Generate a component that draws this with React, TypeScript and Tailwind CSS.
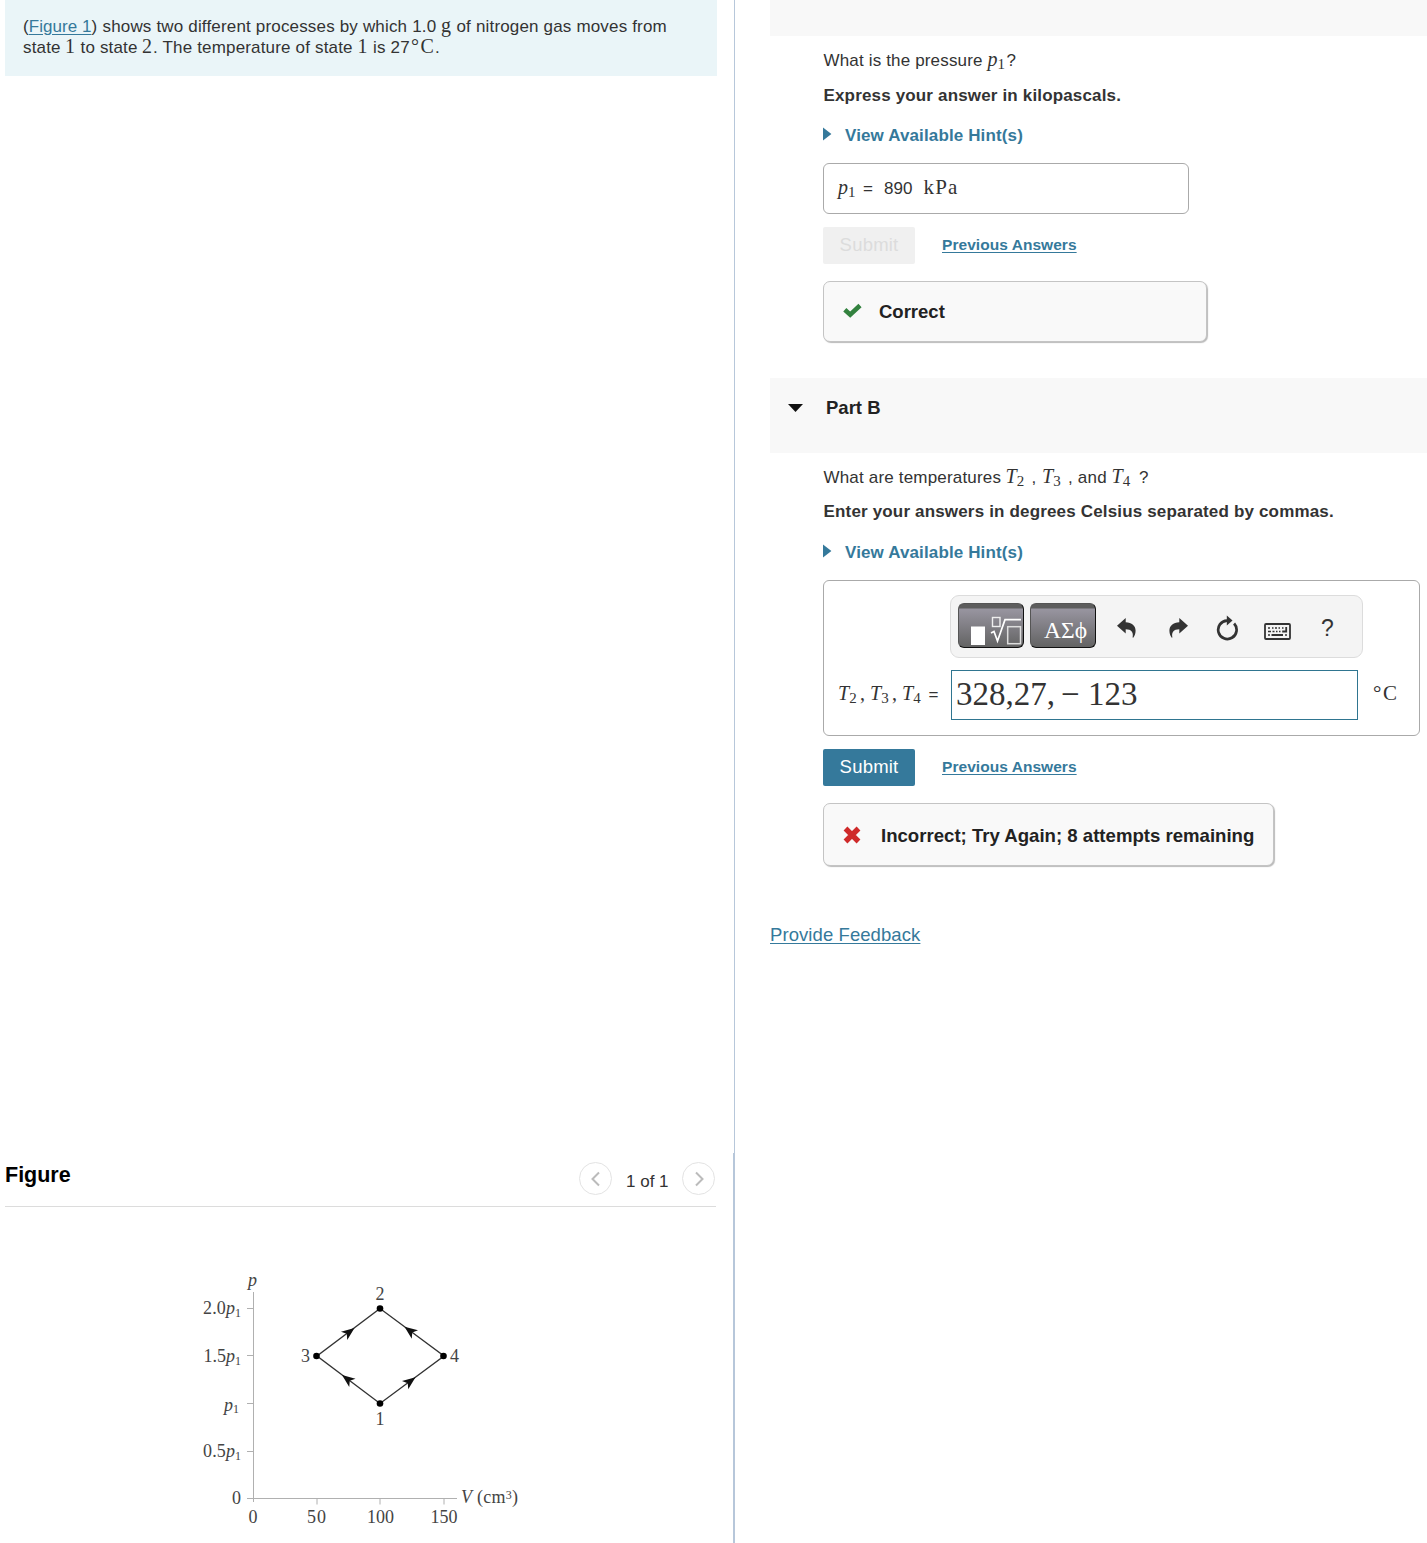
import React from 'react';

type SegProps = { w: string; cls?: string; children: React.ReactNode };

function Seg({ w, cls = '', children }: SegProps) {
  return <span className={`shrink-0 whitespace-pre ${w} ${cls}`}>{children}</span>;
}

const serif = "font-['Liberation_Serif']";

function Variable({ name, sub, w }: { name: string; sub: string; w: string }) {
  return (
    <span className={`shrink-0 whitespace-nowrap font-['Liberation_Serif'] text-[20px] leading-none ${w}`}>
      <i>{name}</i>
      <span className="relative top-[3px] text-[15px]">{sub}</span>
    </span>
  );
}

function Hints() {
  return (
    <div className="flex h-5 items-center text-[17px] leading-5 font-bold text-[#35799b]">
      <svg className="mr-[13px] -mt-[3px] h-[14px] w-[9px]" viewBox="0 0 9 14">
        <path d="M0 0.5 8.4 7 0 13.5Z" fill="currentColor" />
      </svg>
      <span className="mt-px tracking-[0.13px] whitespace-nowrap">View Available Hint(s)</span>
    </div>
  );
}

function Actions({ disabled }: { disabled?: boolean }) {
  return (
    <div className="flex h-[37px] w-[400px]">
      <button
        className={`h-[37px] w-[92px] rounded-[2px] pb-[2px] text-[18.500px] leading-[22px] tracking-[0.2px] ${
          disabled ? 'bg-[#f0f0f0] text-[#dcdcdc]' : 'bg-[#35799b] text-white'
        }`}
      >
        Submit
      </button>
      <a className="mt-[8px] ml-[27px] text-[15.500px] leading-5 font-bold tracking-[0.05px] whitespace-nowrap text-[#35799b] underline underline-offset-2">
        Previous Answers
      </a>
    </div>
  );
}

function Keyboard() {
  return (
    <svg className="h-[17px] w-[27px]" viewBox="0 0 27 17" fill="none">
      <rect x="1" y="1" width="25" height="15" rx="1" stroke="#333" strokeWidth="1.8" />
      <path d="M4 5h2M8 5h1.500M11 5h2M14.500 5h1.500M18 5h1.500M4 8.500h3M8.500 8.500h2M12 8.500h1.500M15 8.500h1.500M4 12h2M21 12h2" stroke="#333" strokeWidth="1.700" />
      <path d="M7.500 12h11.500M22.200 4v4.500h-4" stroke="#333" strokeWidth="1.800" />
    </svg>
  );
}

function CurvedArrow({ flip }: { flip?: boolean }) {
  return (
    <svg className={`h-5 w-[19px] ${flip ? '-scale-x-100' : ''}`} viewBox="0 0 19 20">
      <path d="M0 7.800 8.700 0V4.200C14.800 4.400 18.600 7.600 18.600 12.800 18.600 16 17.300 18.500 16.200 19.700L15.600 19.400C16.700 14.500 14.500 11.400 8.700 11.300V15.400Z" fill="#333" />
    </svg>
  );
}

const keyFace =
  'h-[45px] w-[66px] shrink-0 overflow-hidden rounded-[6px] border border-[#555] border-r-[#111] border-b-[#111] bg-[linear-gradient(#5d5d5d_4px,#9895a0_5px,#636363)]';

function Toolbar() {
  return (
    <div className="ml-[127px] flex h-[63px] w-[413px] rounded-[9px] border border-[#dcdcdc] bg-[#f4f4f4] pt-[7px] pl-[7px]">
      <div className={keyFace}>
        <svg className="-mt-px h-[45px] w-[64px]" viewBox="0 0 64 45" fill="none">
          <rect x="12" y="23.500" width="14" height="18.500" fill="white" />
          <rect x="33.500" y="14.500" width="7.500" height="9" stroke="#eee" strokeWidth="1.400" />
          <path d="M32 30l3-1.500 3.500 9.500 7.500-21.300H62" stroke="white" strokeWidth="1.700" />
          <rect x="48.700" y="23.700" width="12.800" height="17" stroke="#ddd" strokeWidth="1.500" />
        </svg>
      </div>
      <div className={`${keyFace} ml-[6px] pt-[13px] pl-[13px] font-['Liberation_Serif'] text-[23.500px] leading-[27px] text-white`}>
        ΑΣϕ
      </div>
      <div className="mt-[15px] ml-[21px] shrink-0"><CurvedArrow /></div>
      <div className="mt-[15px] ml-[33px] shrink-0"><CurvedArrow flip /></div>
      <svg className="mt-[12px] ml-[28px] h-[26px] w-[22px] shrink-0" viewBox="0 0 22 26" fill="none">
        <path d="M11 5.600A9.200 9.200 0 1 0 18.100 8.500" stroke="#333" strokeWidth="2.700" />
        <path d="M10.800 0.500 16.500 5.500 10.800 10.500Z" fill="#333" />
      </svg>
      <div className="mt-[19.500px] ml-[26px] shrink-0"><Keyboard /></div>
      <span className="mt-[12px] ml-[30px] text-[23px] leading-[27px] text-[#333]">?</span>
    </div>
  );
}

const arrows = [
  'translate(164.500,68) rotate(-37)',
  'translate(214.500,66.700) rotate(-143)',
  'translate(152,115) rotate(-143)',
  'translate(225.500,117.300) rotate(-37)',
];

function Chart() {
  return (
    <svg className="ml-[190px] h-[283px] w-[340px]" viewBox="0 0 340 283" fontFamily="Liberation Serif" fontSize="18" fill="#444">
      <path d="M63.500 32V242M57 238.500H267M57 48.500h6M57 95.500h6M57 143.500h6M57 191.500h6M127 238v6.500M190 238v6.500M254 238v6.500" stroke="#b0b0b0" fill="none" />
      <path d="M190 48.500 127 96 190 143.500 254 96Z" stroke="#333" strokeWidth="1.400" fill="none" />
      {arrows.map((t) => (
        <path key={t} transform={t} d="M0 0-13-5.200-9.700 0-13 5.200Z" fill="#111" />
      ))}
      {[[190, 48.5], [126.5, 96], [190, 143.5], [253.5, 96]].map(([x, y]) => (
        <circle key={`${x}-${y}`} cx={x} cy={y} r="3.300" fill="#000" />
      ))}
      <text x="58" y="26" fontStyle="italic">p</text>
      <g>
        <text x="13" y="54" textLength="38">2.0<tspan fontStyle="italic">p</tspan><tspan fontSize="12" dy="3">1</tspan></text>
        <text x="13.500" y="102" textLength="37.500">1.5<tspan fontStyle="italic">p</tspan><tspan fontSize="12" dy="3">1</tspan></text>
        <text x="34" y="150.500"><tspan fontStyle="italic">p</tspan><tspan fontSize="12" dy="2">1</tspan></text>
        <text x="13" y="197" textLength="38">0.5<tspan fontStyle="italic">p</tspan><tspan fontSize="12" dy="3">1</tspan></text>
        <text x="42" y="244">0</text>
      </g>
      <g textAnchor="middle">
        <text x="190" y="40">2</text>
        <text x="115.500" y="102">3</text>
        <text x="264.500" y="102">4</text>
        <text x="190" y="164.500">1</text>
        <text x="63" y="263">0</text>
        <text x="126.500" y="263" textLength="19">50</text>
        <text x="190.500" y="263">100</text>
        <text x="254" y="263">150</text>
      </g>
      <text x="271" y="243" textLength="57"><tspan fontStyle="italic">V</tspan> (cm<tspan fontSize="12" dy="-4">3</tspan><tspan dy="4">)</tspan></text>
    </svg>
  );
}

function PageButton({ d }: { d: string }) {
  return (
    <button className="flex h-[33px] w-[33px] items-center justify-center rounded-full border border-[#e3e3e3]">
      <svg className="h-[16px] w-[10px]" viewBox="0 0 10 16" fill="none">
        <path d={d} stroke="#bbb" strokeWidth="2" />
      </svg>
    </button>
  );
}

export default function App() {
  return (
    <div className="flex h-[1543px] w-[1427px] overflow-hidden bg-white font-['Liberation_Sans',sans-serif] text-[17px] leading-5 text-[#333]">
      <aside className="flex h-full w-[735px] shrink-0 flex-col">
        <div className="h-[1153px] border-r border-[#b7c7da] pl-[5px]">
          <section className="h-[76px] w-[712px] bg-[#eaf5f8] pt-[15px] pl-[18px] tracking-[0.17px]">
            <div className="flex h-[21px] items-baseline">
              <Seg w="w-[79.500px]" cls="tracking-[0.05px]">(<a className="text-[#35799b] underline underline-offset-2">Figure 1</a>)</Seg>
              <Seg w="w-[338.500px]">shows two different processes by which 1.0</Seg>
              <Seg w="w-[15.500px]" cls={`${serif} text-[20px] leading-none`}>g</Seg>
              <Seg w="w-[215px]">of nitrogen gas moves from</Seg>
            </div>
            <div className="flex h-[21px] items-baseline">
              <Seg w="w-[42px]">state</Seg>
              <Seg w="w-[15.500px]" cls={`${serif} text-[20px] leading-none`}>1</Seg>
              <Seg w="w-[61.500px]">to state</Seg>
              <Seg w="w-[11px]" cls={`${serif} text-[20px] leading-none`}>2</Seg>
              <Seg w="w-[204.500px]">. The temperature of state</Seg>
              <Seg w="w-[15.500px]" cls={`${serif} text-[20px] leading-none`}>1</Seg>
              <Seg w="w-[38px]">is 27</Seg>
              <Seg w="w-[9.500px]" cls={`${serif} text-[20px] leading-none`}>°</Seg>
              <Seg w="w-[14.500px]" cls={`${serif} text-[20px] leading-none`}>C</Seg>
              <Seg w="w-[5px]">.</Seg>
            </div>
          </section>
        </div>
        <div className="flex-1 border-r-2 border-[#b7c7da] pl-[5px]">
          <div className="flex h-[54px] w-[711px] border-b border-[#dcdcdc]">
            <h2 className="mt-[9px] w-[574px] text-[21.500px] leading-[26px] font-bold text-black">Figure</h2>
            <div className="mt-[9px] flex h-[33px] items-center">
              <PageButton d="M8 1.500 1.500 8 8 14.500" />
              <span className="mx-[14px] mt-[6px] w-[42px] whitespace-nowrap">1 of 1</span>
              <PageButton d="M2 1.500 8.500 8 2 14.500" />
            </div>
          </div>
          <div className="-ml-[5px] pt-[53px]"><Chart /></div>
        </div>
      </aside>

      <main className="w-[692px] pl-[35px]">
        <div className="h-9 bg-[#f8f8f8]" />
        <section className="h-[342px] pt-[13px] pl-[53px]">
          <div className="flex h-5 items-baseline">
            <Seg w="w-[164px]" cls="ml-[0.500px] tracking-[0.16px]">What is the pressure</Seg>
            <Variable name="p" sub="1" w="w-[19px]" />
            <span>?</span>
          </div>
          <p className="mt-[17px] ml-[0.500px] font-bold tracking-[0.16px] whitespace-nowrap">Express your answer in kilopascals.</p>
          <div className="mt-[19px]"><Hints /></div>
          <div className="mt-[18px] flex h-[51px] w-[366px] items-baseline rounded-[6px] border border-[#aaa] pt-[13px] pl-[14px]">
            <Variable name="p" sub="1" w="w-[25px]" />
            <Seg w="w-[21px]">=</Seg>
            <Seg w="w-[39.500px]" cls="tracking-[0.1px]">890</Seg>
            <Seg w="w-[40px]" cls={`${serif} text-[21px] leading-none tracking-[1.200px]`}>kPa</Seg>
          </div>
          <div className="mt-[13px]"><Actions disabled /></div>
          <div className="mt-[17px] flex h-[61px] w-[384px] items-center rounded-[7px] border border-[#c4c4c4] bg-[#f9f9f9] pl-[19px] shadow-[1px_1px_1px_#bbb]">
            <svg className="-mt-[2px] h-[15px] w-[19px]" viewBox="0 0 19 15" fill="none">
              <path d="M1.800 6.800 7.200 11.700 17 2.500" stroke="#33823f" strokeWidth="4.600" />
            </svg>
            <span className="ml-[17px] text-[18.500px] leading-[22px] font-bold text-[#222]">Correct</span>
          </div>
        </section>
        <header className="flex h-[75px] bg-[#f8f8f8] pt-[19px]">
          <svg className="mt-[7px] ml-[18px] h-[8px] w-[15px]" viewBox="0 0 15 8"><path d="M0 0H15L7.500 8Z" fill="#111" /></svg>
          <h3 className="ml-[23px] text-[18.500px] leading-[22px] font-bold text-[#222]">Part B</h3>
        </header>
        <section className="pt-[13px] pl-[53px]">
          <div className="flex h-5 items-baseline">
            <Seg w="w-[182px]" cls="ml-[0.500px] tracking-[0.18px]">What are temperatures</Seg>
            <Variable name="T" sub="2" w="w-[26px]" />
            <Seg w="w-[10.500px]">,</Seg>
            <Variable name="T" sub="3" w="w-[26px]" />
            <Seg w="w-[43.500px]" cls="tracking-[0.2px]">, and</Seg>
            <Variable name="T" sub="4" w="w-[27.500px]" />
            <span>?</span>
          </div>
          <p className="mt-[16px] ml-[0.500px] font-bold tracking-[0.165px] whitespace-nowrap">Enter your answers in degrees Celsius separated by commas.</p>
          <div className="mt-[20px]"><Hints /></div>
          <div className="mt-[18px] h-[156px] w-[597px] rounded-[6px] border border-[#aaa] pt-[14px]">
            <div className="-ml-px"><Toolbar /></div>
            <div className="mt-[12px] flex h-[50px] items-center pl-[14px]">
              <div className="-mt-[3px] flex w-[113px] shrink-0 items-baseline">
                <Variable name="T" sub="2" w="w-[22px]" />
                <Seg w="w-[10px]" cls={`${serif} text-[20px] leading-none`}>,</Seg>
                <Variable name="T" sub="3" w="w-[22px]" />
                <Seg w="w-[10px]" cls={`${serif} text-[20px] leading-none`}>,</Seg>
                <Variable name="T" sub="4" w="w-[26.500px]" />
                <span>=</span>
              </div>
              <div className="flex h-[50px] w-[407px] shrink-0 items-center border border-[#2f7590] pb-[3px] pl-[4px] font-['Liberation_Serif'] text-[33px] leading-10 whitespace-nowrap">
                <span className="w-[105px]">328,27,</span>
                <span className="w-[27px]">−</span>
                <span>123</span>
              </div>
              <span className="-mt-[4px] ml-[15px] font-['Liberation_Serif'] text-[21px] tracking-[1.500px]">°C</span>
            </div>
          </div>
          <div className="mt-[13px]"><Actions /></div>
          <div className="mt-[17px] flex h-[63px] w-[451px] items-center rounded-[7px] border border-[#c4c4c4] bg-[#f9f9f9] pl-[19px] shadow-[1px_1px_1px_#bbb]">
            <svg className="h-[18px] w-[18px]" viewBox="0 0 18 18" fill="none">
              <path d="M2.500 2.500 15.500 15.500M15.500 2.500 2.500 15.500" stroke="#cf2a2a" strokeWidth="5.400" />
            </svg>
            <span className="mt-[2px] ml-[20px] text-[18.600px] leading-[22px] font-bold whitespace-nowrap text-[#222]">Incorrect; Try Again; 8 attempts remaining</span>
          </div>
        </section>
        <a className="mt-[58px] block w-fit text-[18.500px] leading-[22px] tracking-[0.080px] text-[#35799b] underline underline-offset-2">Provide Feedback</a>
      </main>
    </div>
  );
}
